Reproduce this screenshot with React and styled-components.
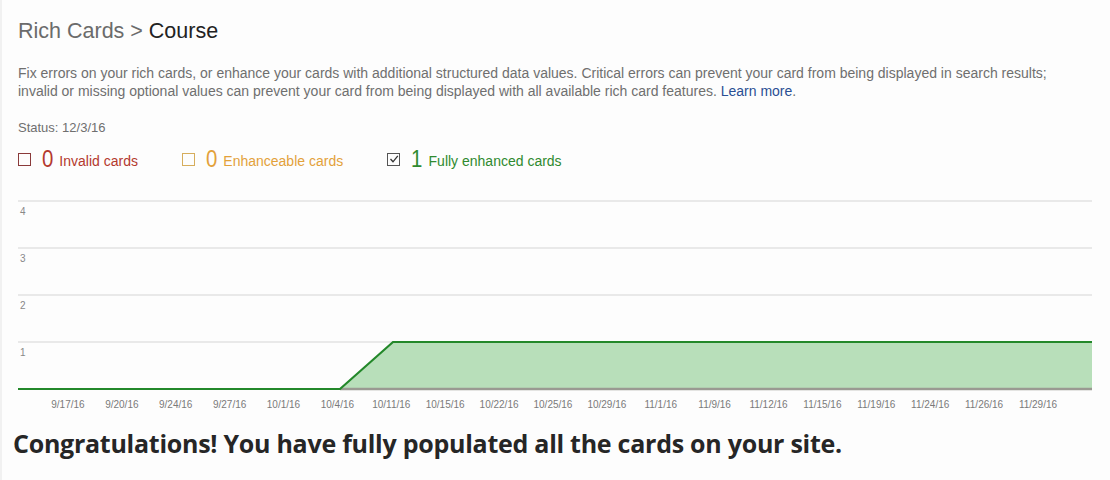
import React from 'react';
import styled, { createGlobalStyle } from 'styled-components';

const GlobalStyle = createGlobalStyle`
  body {
    margin: 0;
    background: #fff;
    font-family: "Liberation Sans", Arial, sans-serif;
  }
`;

const Page = styled.div`
  width: 1110px;
  height: 480px;
  box-sizing: border-box;
  padding: 17px 18px 0 16px;
  background: #fdfdfd;
  border-left: 2px solid #f1f1f1;
`;

const Title = styled.h1`
  margin: 0;
  font-size: 21.5px;
  font-weight: 400;
  line-height: 28px;
  color: #6b6b6b;

  span {
    color: #222;
  }
`;

const Description = styled.p`
  margin: 19px 0 0;
  font-size: 14px;
  line-height: 18px;
  color: #6f6f6f;

  a {
    color: #2a4f94;
    text-decoration: none;
  }
`;

const Status = styled.div`
  margin-top: 20px;
  font-size: 13px;
  color: #6f6f6f;
`;

const Legend = styled.div`
  display: flex;
  align-items: center;
  gap: 44px;
  margin-top: 11px;
`;

const LegendItem = styled.div`
  display: flex;
  align-items: center;
  color: ${p => p.color};
`;

const Box = styled.span`
  width: 13px;
  height: 13px;
  box-sizing: border-box;
  border: 1px solid ${p => p.color};
  display: inline-flex;
  align-items: center;
  justify-content: center;
  margin-right: 11px;
`;

const Count = styled.span`
  font-size: 24px;
  line-height: 26px;
  margin-right: 4px;
  transform: scaleX(0.85);
  transform-origin: left center;
`;

const LegendLabel = styled.span`
  font-size: 14px;
  padding-top: 4px;
`;

const ChartWrap = styled.div`
  margin-top: 24px;
`;

const XAxis = styled.div`
  display: flex;
  padding-left: 23px;
  margin-top: 7px;
`;

const XLabel = styled.span`
  width: 53.9px;
  flex: none;
  text-align: center;
  font-size: 10px;
  color: #7a7a7a;
`;

const Congrats = styled.div`
  margin: 18px 0 0 -5px;
  font-family: "Open Sans", sans-serif;
  font-weight: 700;
  font-size: 25px;
  line-height: 30px;
  color: #262626;
  letter-spacing: -0.26px;
`;

const dates = [
  '9/17/16', '9/20/16', '9/24/16', '9/27/16', '10/1/16', '10/4/16', '10/11/16',
  '10/15/16', '10/22/16', '10/25/16', '10/29/16', '11/1/16', '11/9/16',
  '11/12/16', '11/15/16', '11/19/16', '11/24/16', '11/26/16', '11/29/16',
];

const Check = () => (
  <svg width="10" height="10" viewBox="0 0 10 10">
    <path d="M1.5 5 L4 7.8 L8.8 1.8" fill="none" stroke="#333" strokeWidth="1.3" />
  </svg>
);

const Chart = () => {
  const w = 1074;
  const grid = [5, 52, 99, 146];
  const base = 193;
  return (
    <svg width={w} height={196} style={{ display: 'block' }}>
      {grid.map((y, i) => (
        <g key={y}>
          <line x1="0" x2={w} y1={y} y2={y} stroke="#d6d6d6" strokeWidth="1.2" />
          <text x="2" y={y + 14} fontSize="10" fill="#888" fontFamily="Liberation Sans, sans-serif">
            {4 - i}
          </text>
        </g>
      ))}
      <polygon points={`322,${base} 375,146 ${w},146 ${w},${base}`} fill="#b8dfba" />
      <line x1="322" x2={w} y1={base} y2={base} stroke="#9a9a92" strokeWidth="2.5" />
      <polyline
        points={`0,${base} 322,${base} 375,146 ${w},146`}
        fill="none"
        stroke="#23882a"
        strokeWidth="2.2"
      />
    </svg>
  );
};

const App = () => (
  <>
    <GlobalStyle />
    <Page>
      <Title>
        Rich Cards &gt; <span>Course</span>
      </Title>
      <Description>
        Fix errors on your rich cards, or enhance your cards with additional structured data values. Critical errors can prevent your card from being displayed in search results;
        <br />
        invalid or missing optional values can prevent your card from being displayed with all available rich card features. <a href="#">Learn more</a>.
      </Description>
      <Status>Status: 12/3/16</Status>
      <Legend>
        <LegendItem color="#b4392e">
          <Box color="#8a3a3a" />
          <Count>0</Count>
          <LegendLabel>Invalid cards</LegendLabel>
        </LegendItem>
        <LegendItem color="#e3a13a">
          <Box color="#d6ad5c" />
          <Count>0</Count>
          <LegendLabel>Enhanceable cards</LegendLabel>
        </LegendItem>
        <LegendItem color="#2f8a2f">
          <Box color="#555">
            <Check />
          </Box>
          <Count>1</Count>
          <LegendLabel>Fully enhanced cards</LegendLabel>
        </LegendItem>
      </Legend>
      <ChartWrap>
        <Chart />
        <XAxis>
          {dates.map(d => (
            <XLabel key={d}>{d}</XLabel>
          ))}
        </XAxis>
      </ChartWrap>
      <Congrats>Congratulations! You have fully populated all the cards on your site.</Congrats>
    </Page>
  </>
);

export default App;
